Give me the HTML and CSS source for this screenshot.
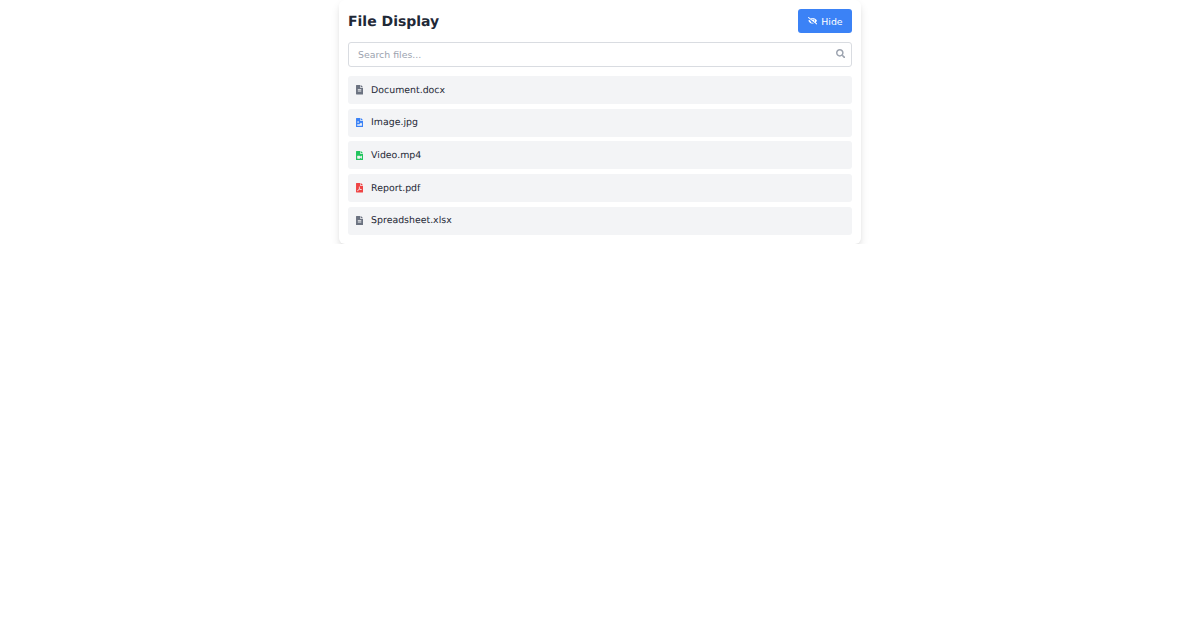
FILE: index.html
```html
<!DOCTYPE html>
<html>
<head>
    <meta charset="UTF-8" />
    <title>File Display</title>
    <link rel="stylesheet" href="styles.css">
</head>
<body>

<section class="card">
  <header class="card-head">
    <h1>File Display</h1>
    <button class="hide-btn" type="button">
      <svg class="icon eye" viewBox="0 0 640 512"><path d="M320 400c-75.85 0-137.25-58.71-142.9-133.11L72.2 185.82c-13.79 17.3-26.48 35.59-36.72 55.59a32.35 32.35 0 0 0 0 29.19C89.71 376.41 197.07 448 320 448c26.91 0 52.87-4 77.89-10.46L346 397.39a144.13 144.13 0 0 1-26 2.61zm313.82 58.1l-110.55-85.44a331.25 331.25 0 0 0 81.25-102.07 32.35 32.35 0 0 0 0-29.19C550.29 135.59 442.93 64 320 64a308.15 308.15 0 0 0-147.32 37.7L45.46 3.37A16 16 0 0 0 23 6.18L3.37 31.45A16 16 0 0 0 6.18 53.9l588.36 454.73a16 16 0 0 0 22.46-2.81l19.64-25.27a16 16 0 0 0-2.82-22.45zm-183.72-142l-39.3-30.38A94.75 94.75 0 0 0 416 256a94.76 94.76 0 0 0-121.31-92.21A47.65 47.65 0 0 1 304 192a46.64 46.64 0 0 1-1.54 10l-73.61-56.89A142.31 142.31 0 0 1 320 112a143.92 143.92 0 0 1 144 144c0 21.63-5.29 41.79-13.9 60.11z"/></svg>
      Hide
    </button>
  </header>

  <div class="search">
    <input type="text" placeholder="Search files...">
    <svg class="icon search-icon" viewBox="0 0 512 512"><path d="M505 442.7L405.3 343c-4.5-4.5-10.6-7-17-7H372c27.6-35.3 44-79.7 44-128C416 93.1 322.9 0 208 0S0 93.1 0 208s93.1 208 208 208c48.3 0 92.7-16.4 128-44v16.3c0 6.4 2.5 12.5 7 17l99.7 99.7c9.4 9.4 24.6 9.4 33.9 0l28.3-28.3c9.4-9.4 9.4-24.6.1-34zM208 336c-70.7 0-128-57.2-128-128 0-70.7 57.2-128 128-128 70.7 0 128 57.2 128 128 0 70.7-57.2 128-128 128z"/></svg>
  </div>

  <ul class="files">
    <li>
      <svg class="icon gray" viewBox="0 0 384 512"><path d="M224 136V0H24C10.7 0 0 10.7 0 24v464c0 13.3 10.7 24 24 24h336c13.3 0 24-10.7 24-24V160H248c-13.2 0-24-10.8-24-24zm64 236c0 6.6-5.4 12-12 12H108c-6.6 0-12-5.4-12-12v-8c0-6.6 5.4-12 12-12h168c6.6 0 12 5.4 12 12v8zm0-64c0 6.6-5.4 12-12 12H108c-6.6 0-12-5.4-12-12v-8c0-6.6 5.4-12 12-12h168c6.6 0 12 5.4 12 12v8zm0-72v8c0 6.6-5.4 12-12 12H108c-6.6 0-12-5.4-12-12v-8c0-6.6 5.4-12 12-12h168c6.6 0 12 5.4 12 12zm96-114.1v6.1H256V0h6.1c6.4 0 12.5 2.5 17 7l97.9 98c4.5 4.5 7 10.6 7 16.9z"/></svg>
      <span>Document.docx</span>
    </li>
    <li>
      <svg class="icon blue" viewBox="0 0 384 512"><path d="M384 121.941V128H256V0h6.059a24 24 0 0 1 16.97 7.029l97.941 97.941a24.002 24.002 0 0 1 7.03 16.971zM248 160c-13.2 0-24-10.8-24-24V0H24C10.745 0 0 10.745 0 24v464c0 13.255 10.745 24 24 24h336c13.255 0 24-10.745 24-24V160H248zm-135.455 16c26.51 0 48 21.49 48 48s-21.49 48-48 48-48-21.49-48-48 21.491-48 48-48zm208 240h-256l.485-48.485L104.545 328c4.686-4.686 11.799-4.201 16.485.485L160.545 368 264.06 264.485c4.686-4.686 12.284-4.686 16.971 0L320.545 304v112z"/></svg>
      <span>Image.jpg</span>
    </li>
    <li>
      <svg class="icon green" viewBox="0 0 384 512"><path d="M384 121.941V128H256V0h6.059c6.365 0 12.47 2.529 16.971 7.029l97.941 97.941A24.005 24.005 0 0 1 384 121.941zM224 136V0H24C10.745 0 0 10.745 0 24v464c0 13.255 10.745 24 24 24h336c13.255 0 24-10.745 24-24V160H248c-13.2 0-24-10.8-24-24zm96 144.016v111.963c0 21.445-25.943 31.998-40.971 16.971L224 353.941V392c0 13.255-10.745 24-24 24H88c-13.255 0-24-10.745-24-24V280c0-13.255 10.745-24 24-24h112c13.255 0 24 10.745 24 24v38.059l55.029-55.013c15.011-15.01 40.971-4.491 40.971 16.97z"/></svg>
      <span>Video.mp4</span>
    </li>
    <li>
      <svg class="icon red" viewBox="0 0 384 512"><path d="M181.9 256.1c-5-16-4.9-46.9-2-46.9 8.4 0 7.6 36.9 2 46.9zm-1.7 47.2c-7.7 20.2-17.3 43.3-28.4 62.7 18.3-7 39-17.2 62.9-21.9-12.7-9.6-24.9-23.4-34.5-40.8zM86.1 428.1c0 .8 13.2-5.4 34.9-40.2-6.7 6.3-29.1 24.5-34.9 40.2zM248 160h136v328c0 13.3-10.7 24-24 24H24c-13.3 0-24-10.7-24-24V24C0 10.7 10.7 0 24 0h200v136c0 13.2 10.8 24 24 24zm-8 171.8c-20-12.2-33.3-29-42.7-53.8 4.5-18.5 11.6-46.6 6.2-64.2-4.7-29.4-42.4-26.5-47.8-6.8-5 18.3-.4 44.1 8.1 77-11.6 27.6-28.7 64.6-40.8 85.8-.1 0-.1.1-.2.1-27.1 13.9-73.6 44.5-54.5 68 5.6 6.9 16 10 21.5 10 17.9 0 35.7-18 61.1-61.8 25.8-8.5 54.1-19.1 79-23.2 21.7 11.8 47.1 19.5 64 19.5 29.2 0 31.2-32 19.7-43.4-13.9-13.6-54.3-9.7-73.6-7.2zM377 105L279 7c-4.5-4.5-10.6-7-17-7h-6v128h128v-6.1c0-6.3-2.5-12.4-7-16.9zm-74.1 255.3c4.1-2.7-2.5-11.9-42.8-9 37.1 15.8 42.8 9 42.8 9z"/></svg>
      <span>Report.pdf</span>
    </li>
    <li>
      <svg class="icon gray" viewBox="0 0 384 512"><path d="M224 136V0H24C10.7 0 0 10.7 0 24v464c0 13.3 10.7 24 24 24h336c13.3 0 24-10.7 24-24V160H248c-13.2 0-24-10.8-24-24zm64 236c0 6.6-5.4 12-12 12H108c-6.6 0-12-5.4-12-12v-8c0-6.6 5.4-12 12-12h168c6.6 0 12 5.4 12 12v8zm0-64c0 6.6-5.4 12-12 12H108c-6.6 0-12-5.4-12-12v-8c0-6.6 5.4-12 12-12h168c6.6 0 12 5.4 12 12v8zm0-72v8c0 6.6-5.4 12-12 12H108c-6.6 0-12-5.4-12-12v-8c0-6.6 5.4-12 12-12h168c6.6 0 12 5.4 12 12zm96-114.1v6.1H256V0h6.1c6.4 0 12.5 2.5 17 7l97.9 98c4.5 4.5 7 10.6 7 16.9z"/></svg>
      <span>Spreadsheet.xlsx</span>
    </li>
  </ul>
</section>

</body>
</html>
```

FILE: styles.css
```css
* {
  box-sizing: border-box;
}

body {
  margin: 0;
  background: #fff;
  font-family: "DejaVu Sans", sans-serif;
  font-size: 9.4px;
  color: #1f2937;
  text-rendering: geometricPrecision;
}

.card {
  width: 522px;
  margin: 0 auto;
  padding: 9px;
  background: #fff;
  border-radius: 6px;
  box-shadow: 0 5px 10px -1px rgba(0, 0, 0, .13), 0 2px 4px -1px rgba(0, 0, 0, .06);
}

.icon {
  display: block;
  fill: currentColor;
  flex: none;
}

/* Header */
.card-head {
  display: flex;
  justify-content: space-between;
  align-items: center;
  margin-bottom: 9px;
}

.card-head h1 {
  margin: 2px 0 0;
  font-size: 14px;
  font-weight: 700;
  color: #1f2937;
}

.hide-btn {
  display: flex;
  align-items: center;
  gap: 4px;
  height: 24px;
  padding: 0 9.4px;
  border: 0;
  border-radius: 3px;
  background: #3b82f6;
  color: #fff;
  font: inherit;
}

.eye {
  width: 9.4px;
  height: 7.5px;
}

/* Search */
.search {
  position: relative;
  margin-bottom: 9px;
}

.search input {
  display: block;
  width: 100%;
  height: 25px;
  padding: 0 9px 1px;
  border: 1px solid #d9dce1;
  border-radius: 3px;
  font: inherit;
  color: #1f2937;
}

.search input::placeholder {
  color: #9ca3af;
}

.search-icon {
  position: absolute;
  right: 7px;
  top: 7px;
  width: 9.4px;
  height: 9.4px;
  color: #9ca3af;
}

/* File list */
.files {
  list-style: none;
  margin: 0;
  padding: 0;
  display: flex;
  flex-direction: column;
  gap: 4.7px;
}

.files li {
  display: flex;
  align-items: center;
  gap: 8px;
  height: 28px;
  padding: 0 8px;
  background: #f3f4f6;
  border-radius: 3px;
}

.files .icon {
  width: 7.1px;
  height: 9.4px;
}

.gray { color: #6b7280; }
.blue { color: #3b82f6; }
.green { color: #22c55e; }
.red { color: #ef4444; }
```
